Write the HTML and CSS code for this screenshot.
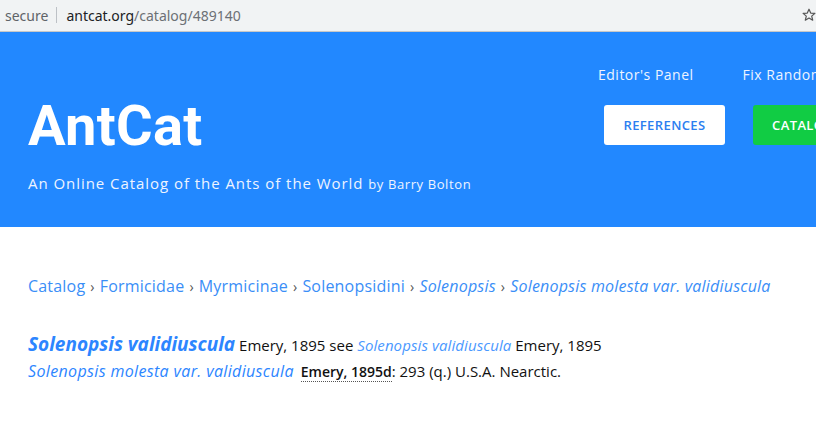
FILE: index.html
```html
<!DOCTYPE html>
<html>
<head>
<meta charset="utf-8">
<link rel="stylesheet" href="styles.css">
</head>
<body>
<div class="chrome">
  <span class="secure">secure</span>
  <span class="sep"></span>
  <span class="url"><span class="host">antcat.org</span>/catalog/489140</span>
  <svg class="star" width="14" height="14" viewBox="0 0 14 14"><path d="M7 1.2 L8.7 5.1 L12.9 5.4 L9.7 8.1 L10.7 12.2 L7 10 L3.3 12.2 L4.3 8.1 L1.1 5.4 L5.3 5.1 Z" fill="none" stroke="#555" stroke-width="1.2" stroke-linejoin="round"/></svg>
</div>
<header class="hero">
  <div class="brand">
    <h1 class="logo">AntCat</h1>
    <p class="tagline">An Online Catalog of the Ants of the World <span class="by">by Barry Bolton</span></p>
  </div>
  <nav class="nav">
    <div class="links">
      <a class="toplink">Editor's Panel</a>
      <a class="toplink">Fix Random</a>
    </div>
    <div class="buttons">
      <a class="btn btn-white">REFERENCES</a>
      <a class="btn btn-green">CATALOG</a>
    </div>
  </nav>
</header>
<main class="content">
  <div class="crumbs">
    <a>Catalog</a><span class="gt">›</span><a>Formicidae</a><span class="gt">›</span><a>Myrmicinae</a><span class="gt">›</span><a>Solenopsidini</a><span class="gt">›</span><a class="i">Solenopsis</a><span class="gt">›</span><a class="i">Solenopsis molesta var. validiuscula</a>
  </div>
  <div class="entry">
    <div class="line1"><a class="name">Solenopsis validiuscula</a> Emery, 1895 see <a class="i">Solenopsis validiuscula</a> Emery, 1895</div>
    <div class="line2"><a class="i">Solenopsis molesta var. validiuscula</a> <span class="ref">Emery, 1895d</span>: 293 (q.) U.S.A. Nearctic.</div>
  </div>
</main>
</body>
</html>
```
FILE: styles.css
```css
* { box-sizing: border-box; }
html, body { margin: 0; padding: 0; background: #fff; overflow: hidden; }
body { width: 816px; height: 433px; font-family: "Open Sans", "Lato", sans-serif; }

.chrome {
  height: 32px;
  background: #f1f3f4;
  border-bottom: 1px solid #c8c8c8;
  display: flex;
  align-items: center;
  padding: 0 0 1px 5px;
  font-family: "Noto Sans", "DejaVu Sans", sans-serif;
  font-size: 14px;
  color: #5f6368;
  position: relative;
}
.secure { color: #5f6368; }
.sep { width: 1px; height: 16px; background: #bdc1c6; margin: 0 9px 0 8px; }
.url { color: #6c7075; }
.host { color: #202124; }
.star { position: absolute; right: 0; top: 8px; }

.hero {
  background: #2288ff;
  height: 195px;
  display: flex;
  justify-content: space-between;
  color: #fff;
  overflow: hidden;
}
.brand { padding: 66px 0 0 28px; }
.logo {
  margin: 0;
  font-family: "Roboto", "Inter", sans-serif;
  font-weight: 700;
  font-size: 56px;
  line-height: 56px;
  letter-spacing: 0.3px;
}
.tagline {
  margin: 19px 0 0 0;
  font-family: "Open Sans", sans-serif;
  font-size: 15px;
  letter-spacing: 0.95px;
  color: #eef4ff;
  white-space: nowrap;
}
.by { font-size: 13px; letter-spacing: 0.6px; }

.nav { width: 218px; flex-shrink: 0; padding-top: 33px; }
.links { display: flex; gap: 49px; white-space: nowrap; }
.toplink {
  font-family: "Open Sans", sans-serif;
  font-size: 14px;
  letter-spacing: 0.5px;
  color: #eef4ff;
}
.buttons { display: flex; gap: 28px; margin-top: 21px; margin-left: 6px; }
.btn {
  flex-shrink: 0;
  height: 40px;
  border-radius: 3px;
  display: flex;
  align-items: center;
  justify-content: center;
  font-family: "Open Sans", sans-serif;
  font-size: 13px;
  letter-spacing: 0.4px;
  font-weight: 600;
}
.btn-white { width: 121px; background: #fff; color: #2c7ef0; }
.btn-green { width: 110px; background: #11cc44; color: #fff; justify-content: flex-start; padding-left: 19px; }

.content { padding: 48px 28px 0 28px; }
.crumbs { font-size: 16px; line-height: 22px; white-space: nowrap; letter-spacing: 0.2px; }
.crumbs a { color: #3a8ef7; }
.gt { color: #555; font-size: 14px; margin: 0 5px; }
.i { font-style: italic; }

.entry { margin-top: 34px; color: #111; white-space: nowrap; }
.line1 { font-size: 15px; line-height: 24px; }
.line1 .name { font-size: 19px; font-weight: 700; font-style: italic; color: #2c85ff; }
.line1 .i { color: #4a98ff; letter-spacing: 0.1px; }
.line2 { font-size: 15px; line-height: 24px; margin-top: 2px; }
.line2 .i { color: #2c85ff; font-size: 16px; letter-spacing: 0.35px; }
.ref { font-weight: 600; font-size: 14px; border-bottom: 1px dotted #555; margin-left: 3px; }
```
